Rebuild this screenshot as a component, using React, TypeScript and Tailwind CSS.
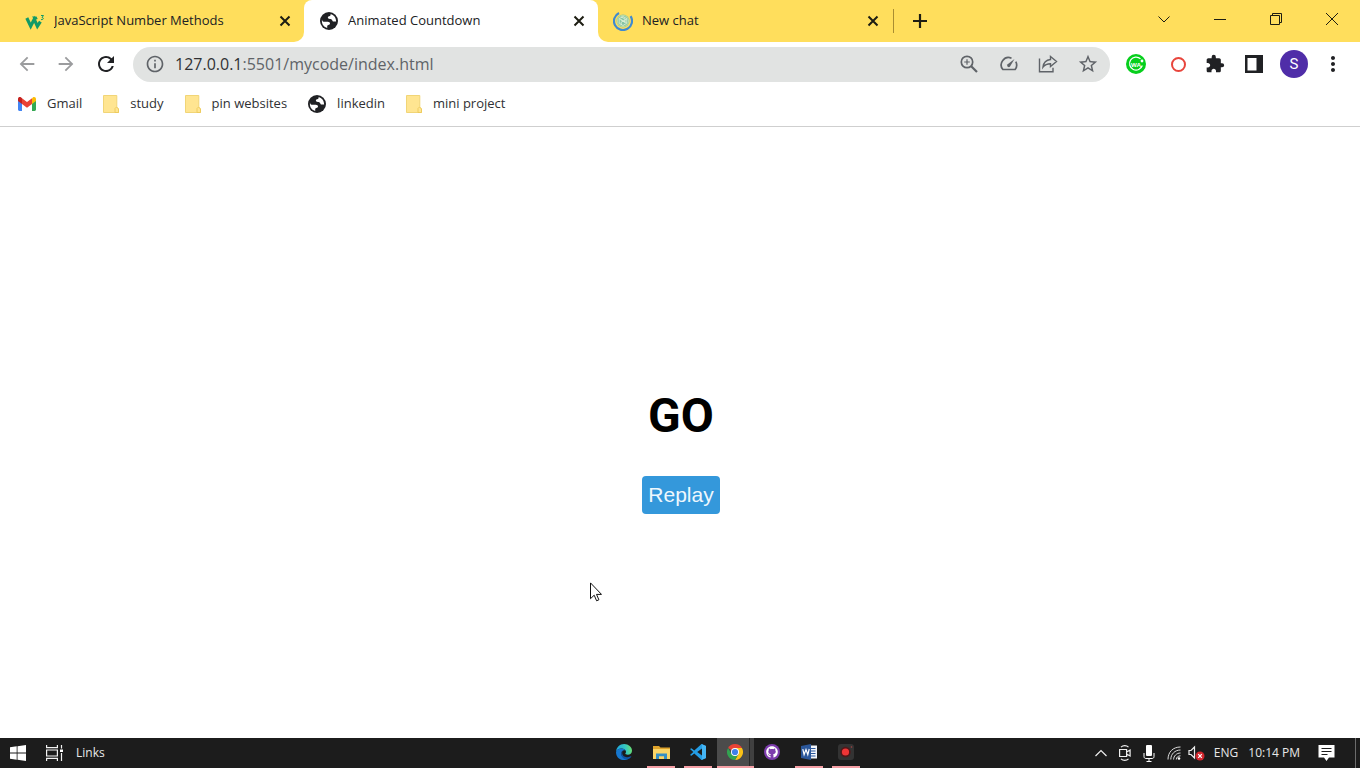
import React from 'react';
import {
  MdArrowBack,
  MdArrowForward,
  MdExtension,
  MdMoreVert,
  MdOutlineInfo,
  MdRefresh,
  MdStarBorder,
} from 'react-icons/md';
import { FaGithub } from 'react-icons/fa';

function GlobeIcon({ className }: { className?: string }) {
  return (
    <svg viewBox="0 0 18 18" className={className} aria-hidden="true">
      <circle cx="9" cy="9" r="9" fill="#202124" />
      <path d="M2 7.4c.1 1.5 1 2.3 2.6 2.3h3.2c1.3 0 2.2.7 2.2 1.8 0 .9-.7 1.3-1.7 1.4-.8.1-1.1.7-1.1 1.6v1.4C4.300 15.200 1.900 12.500 1.900 9.200c0-.7 0-1.200.1-1.800z" fill="#fff" />
      <path d="M10.600 2.100c.3 1.200-.3 2-1.500 2.200-1 .2-1.300.7-1.200 1.500.1.800.8 1.100 1.900 1.100 1.500 0 2.200.5 2.500 1.500.3 1 1.100 1.300 2.300 1.200l1.500-.2C16.100 5.800 13.800 2.900 10.600 2.100z" fill="#fff" />
    </svg>
  );
}

function SchoolsIcon() {
  return (
    <svg viewBox="0 0 20 20" className="size-5" fill="none" aria-hidden="true">
      <path d="M1.800 7 5.700 15.200 9.200 8.300l3.200 6.900 3-4.500" stroke="#129a66" strokeWidth="3.200" />
      <path d="M7 5.500h4.500l1.200 2.500-3 1z" fill="#129a66" />
      <path d="M16 4.500h2.500L17 6.500c1.900 0 1.900 2.500-1 2.100" stroke="#129a66" strokeWidth="1" />
    </svg>
  );
}

function ChatIcon() {
  return (
    <svg viewBox="0 0 20 20" className="size-5" fill="none" aria-hidden="true">
      <circle cx="10" cy="10" r="6.500" fill="#86c3a4" />
      <path d="M6 1.900A9 9 0 1 0 17.600 5.200" stroke="#3f8ad0" strokeWidth="2.200" />
      <circle cx="10" cy="10" r="5.600" stroke="#cfe2a0" strokeWidth=".8" />
      <path d="M10 5.500l3.800 2.200v4.500L10 14.500l-3.800-2.300V7.700zM6.500 8l5.500 3.500V8L8 5.800M13.700 8l-5.500 3.200v3M8 8.500l5.500 3.300" stroke="#e2f2d8" strokeWidth=".8" />
    </svg>
  );
}

function GmailIcon() {
  return (
    <svg viewBox="0 0 18 14" className="h-3.5 w-[18px]" aria-hidden="true">
      <path d="M0 2.500V12.500c0 .8.600 1.400 1.400 1.400H4V6z" fill="#4285f4" />
      <path d="M14 6v7.900h2.600c.8 0 1.400-.6 1.400-1.400V2.500z" fill="#34a853" />
      <path d="M14 1.500V7l4-3V2c0-1.900-2-2.500-3.200-1.500z" fill="#fbbc04" />
      <path d="M4 7V1.300L9 5l5-3.700V7l-5 3.700z" fill="#ea4335" />
      <path d="M0 2v2l4 3V1.300L3.200.5C1.800-.4 0 .2 0 2z" fill="#c5221f" />
    </svg>
  );
}

function FolderIcon() {
  return (
    <svg viewBox="0 0 16 18" className="h-[18px] w-4" aria-hidden="true">
      <path d="M.5.500h13.300v11.700l1.700 1.600v3.700H.5z" fill="#ffe591" stroke="#f1d577" strokeWidth="1" />
      <path d="M12 17.500v-4l1.500-1.500 2 2v3.500z" fill="#ffe591" stroke="#ecca5b" strokeWidth=".9" />
    </svg>
  );
}

const tabs = [
  { title: 'JavaScript Number Methods', icon: <SchoolsIcon /> },
  { title: 'Animated Countdown', icon: <GlobeIcon className="size-[18px]" /> },
  { title: 'New chat', icon: <ChatIcon /> },
];

function Tab({ index }: { index: number }) {
  const { title, icon } = tabs[index];
  return (
    <div className="flex h-full w-[294px] items-center pr-2.5 pl-[15px]">
      <span className="flex w-5 shrink-0 justify-center">{icon}</span>
      <a href="#" className="ml-[9px] min-w-0 flex-1 truncate text-[13px] text-[#202124]">
        {title}
      </a>
      <button aria-label={'Close ' + title} className="text-[#1d1d12]">
        <svg viewBox="0 0 18 18" className="size-[18px]" stroke="currentColor" strokeWidth="2">
          <path d="M4.500 4.500l9 9M13.500 4.500l-9 9" />
        </svg>
      </button>
    </div>
  );
}

function TabStrip() {
  return (
    <div className="flex h-[42px] bg-white">
      <div className="flex rounded-br-[10px] bg-[#ffde5c] pl-2.5">
        <Tab index={0} />
      </div>
      <div className="bg-[#ffde5c]">
        <div className="h-full rounded-t-lg bg-white">
          <Tab index={1} />
        </div>
      </div>
      <div className="flex min-w-0 flex-1 items-center rounded-bl-[10px] bg-[#ffde5c]">
        <Tab index={2} />
        <span className="ml-px h-6 w-px bg-[#a98d31]" />
        <button aria-label="New tab" className="ml-[15px] text-[#1d1d12]">
          <svg viewBox="0 0 22 22" className="size-[22px]" stroke="currentColor" strokeWidth="2.200">
            <path d="M11 4v14M4 11h14" />
          </svg>
        </button>
        <div className="-mt-1 ml-auto flex items-center text-[#1d1d12]">
          <button aria-label="Search tabs" className="flex w-14 justify-center">
            <svg viewBox="0 0 12 7" className="h-[7px] w-3" fill="none" stroke="currentColor">
              <path d="M.5.500 6 6 11.500.500" />
            </svg>
          </button>
          <button aria-label="Minimize" className="flex w-14 justify-center">
            <svg viewBox="0 0 12 12" className="size-3" stroke="currentColor">
              <path d="M0 6.500h12" />
            </svg>
          </button>
          <button aria-label="Restore" className="flex w-14 justify-center">
            <svg viewBox="0 0 12 12" className="size-3" fill="none" stroke="currentColor">
              <path d="M.5 2.500h9v9h-9zM2.500 2.500v-2h9v9h-2" />
            </svg>
          </button>
          <button aria-label="Close window" className="flex w-14 justify-center">
            <svg viewBox="0 0 12 12" className="size-3" stroke="currentColor">
              <path d="M0 0l12 12M12 0 0 12" />
            </svg>
          </button>
        </div>
      </div>
    </div>
  );
}

function Toolbar() {
  return (
    <div className="flex h-11 items-center bg-white pl-4 text-[#202124]">
      <div className="flex items-center gap-[17px]">
        <button aria-label="Back" className="text-[#9b9c9e]"><MdArrowBack className="size-[22px]" /></button>
        <button aria-label="Forward" className="text-[#9b9c9e]"><MdArrowForward className="size-[22px]" /></button>
        <button aria-label="Reload">
          <MdRefresh className="size-6" />
        </button>
      </div>
      <div className="ml-[15px] flex h-[35px] min-w-0 flex-1 items-center rounded-full bg-[#e1e3e2] pr-[11px] pl-3 text-[#5f6368]">
        <button aria-label="View site information"><MdOutlineInfo className="size-5" /></button>
        <div className="ml-2.5 min-w-0 flex-1 truncate text-base">
          <span className="text-[#303134]">127.0.0.1</span>:5501/mycode/index.html
        </div>
        <div className="flex items-center gap-[19px]">
          <button aria-label="Zoom">
            <svg viewBox="0 0 22 22" className="size-[22px]" fill="none" stroke="currentColor">
              <circle cx="9" cy="9" r="5.700" strokeWidth="1.700" />
              <path d="M13.200 13.200 19 19" strokeWidth="2.200" />
              <path d="M9 6.200v5.600M6.200 9h5.600" strokeWidth="1.200" />
            </svg>
          </button>
          <button aria-label="Performance">
            <svg viewBox="0 0 20 20" className="size-5" fill="none" stroke="currentColor" strokeWidth="1.700">
              <path d="M12.500 4.200a7.300 7.300 0 0 0-8.600 11.300h12.200a7.300 7.300 0 0 0 .7-7.800" />
              <path d="M8.700 12.700a1.800 1.800 0 0 1 0-2.500L15.500 5l-4.300 7.300a1.800 1.800 0 0 1-2.500.4z" fill="currentColor" stroke="none" />
            </svg>
          </button>
          <button aria-label="Share">
            <svg viewBox="0 0 20 20" className="size-5" fill="none" stroke="currentColor" strokeWidth="1.400">
              <path d="M1.500 4.500v13.300h13.500v-4" />
              <path d="M12.500 2.500 18.500 7.500l-6 5V9.700c-3.500 0-5.700 1-7.500 3.300.5-4 3-7 7.500-7.500z" />
            </svg>
          </button>
          <button aria-label="Bookmark this page"><MdStarBorder className="size-[22px]" /></button>
        </div>
      </div>
      <div className="ml-4 flex items-center">
        <button aria-label="WA extension">
          <svg viewBox="0 0 20 20" className="size-5">
            <circle cx="10" cy="10" r="10" fill="#06cf1c" />
            <path d="M14.500 4.800A6.500 6.500 0 1 0 16.300 11.500" fill="none" stroke="#fff" strokeWidth="1.200" />
            <circle cx="16" cy="7" r="1.400" fill="#fff" />
            <text x="10" y="12.500" textAnchor="middle" fontSize="6" fontWeight="700" fill="#fff">WA</text>
          </svg>
        </button>
        <button aria-label="Recorder extension" className="ml-[25px] size-[15px] rounded-full border-2 border-[#e8453c]" />
        <button aria-label="Extensions" className="ml-[19px]"><MdExtension className="size-5" /></button>
        <button aria-label="Side panel" className="ml-5">
          <svg viewBox="0 0 18 18" className="size-[18px]">
            <path d="M0 0h18v18H0z" fill="#202124" />
            <path d="M2.500 3h9v12.500h-9z" fill="#fff" />
          </svg>
        </button>
        <button aria-label="Profile" className="ml-[17px] size-7 rounded-full bg-[#4f2da8] font-['Roboto'] text-[15px] text-white">S</button>
        <button aria-label="Menu" className="mr-[15px] ml-[13px]"><MdMoreVert className="size-6" /></button>
      </div>
    </div>
  );
}

function Bookmarks() {
  return (
    <nav className="flex h-[41px] items-center gap-[21px] border-b border-[#cfcfcf] bg-white pb-[5px] pl-[18px] text-[13px] text-[#303134]">
      <a href="#" className="flex items-center gap-[11px]"><GmailIcon />Gmail</a>
      <a href="#" className="flex items-center gap-[11px]"><FolderIcon />study</a>
      <a href="#" className="flex items-center gap-[11px]"><FolderIcon />pin websites</a>
      <a href="#" className="flex items-center gap-[11px]"><GlobeIcon className="size-[18px]" />linkedin</a>
      <a href="#" className="flex items-center gap-[11px]"><FolderIcon />mini project</a>
    </nav>
  );
}

function EdgeLogo() {
  return (
    <svg viewBox="0 0 16 16" className="size-4">
      <defs>
        <linearGradient id="edgeTop" x1="0" x2="1" y1=".4" y2=".3">
          <stop offset="0" stopColor="#1ba5e0" />
          <stop offset=".6" stopColor="#37c8c0" />
          <stop offset="1" stopColor="#6be06c" />
        </linearGradient>
      </defs>
      <path d="M0 7.800C.2 3.400 3.700 0 8.200 0 12.500 0 16 3 16 6.700c0 2.500-2 4.100-4.200 4.100-1.500 0-2.500-.6-2.500-1.200 0-.5.700-.7.700-1.900C10 5.900 8 4.500 5.500 4.500 2.800 4.500.600 5.900 0 7.800z" fill="url(#edgeTop)" />
      <path d="M0 8c.4-2.200 2.700-3.500 5.300-3.500 1.800 0 3.400.7 4.200 1.900C6.900 5.700 5.200 7.400 5.200 9.500c0 2.900 3.200 6 7.900 4.400C9.500 18 0 16.500 0 8z" fill="#1677cf" />
      <path d="M6.700 7.100c-1.700 3 .8 6.500 4.800 6.100 1.500-.1 2.500-.6 3.300-1 .4-.2.700.1.400.5C12 17.500 5.200 15.300 5.200 9.700c0-1.200.6-2.100 1.500-2.600z" fill="#0f55a5" />
    </svg>
  );
}

function ExplorerLogo() {
  return (
    <svg viewBox="0 0 17 15" className="h-[15px] w-[17px]">
      <path d="M0 1h6l1.500 1.500H17V5H0z" fill="#dfa32b" />
      <path d="M0 4h17v10H0z" fill="#fbd567" />
      <path d="M3 14V8.500h11V14h-3v-2.700H6V14z" fill="#368fc4" />
    </svg>
  );
}

function CodeLogo() {
  return (
    <svg viewBox="0 0 16 16" className="size-4">
      <path d="M11.500 0 16 2v12l-4.500 2L4.300 9.500 1.400 11.800 0 11l3.300-3L0 5l1.400-.8 2.900 2.300zM12 4.500 7.200 8l4.800 3.500z" fill="#249de5" fillRule="evenodd" />
      <path d="M11.500 0 16 2v12l-4.500 2 .5-1.500v-13z" fill="#45b5f4" />
    </svg>
  );
}

function ChromeLogo() {
  return (
    <svg viewBox="0 0 16 16" className="size-4">
      <path d="M8 8 1.070 4A8 8 0 0 1 14.930 4z" fill="#e94335" />
      <path d="M8 4h6.930A8 8 0 0 1 8 16l3.500-6z" fill="#fbc116" />
      <path d="M1.070 4 4.500 10 8 12l3.500-2L8 16A8 8 0 0 1 1.070 4z" fill="#32a350" />
      <circle cx="8" cy="8" r="4" fill="#fff" />
      <circle cx="8" cy="8" r="3.100" fill="#3e7fe8" />
    </svg>
  );
}

function WordLogo() {
  return (
    <svg viewBox="0 0 16 16" className="size-4">
      <path d="M8 1.500h8v13H8z" fill="#f3f6fb" />
      <path d="M9 4.500h5.500M9 7h5.500M9 9.500h5.500M9 12h5.500" stroke="#2b579a" strokeWidth="1" />
      <path d="M0 2 10 0v16L0 14z" fill="#2b579a" />
      <path d="m1.800 5.200 1.300 5.400L5 5.500l1.800 5.100L8.200 5" fill="none" stroke="#fff" strokeWidth="1.200" />
    </svg>
  );
}

function RecorderLogo() {
  return (
    <svg viewBox="0 0 16 16" className="size-4">
      <rect width="16" height="16" rx="3" fill="#333" />
      <circle cx="7.500" cy="8" r="5.200" fill="#521719" />
      <circle cx="7.500" cy="8" r="3.600" fill="#f03536" />
      <circle cx="13.500" cy="3" r=".8" fill="#aa4444" />
    </svg>
  );
}

const apps = [
  { name: 'Edge', icon: <EdgeLogo />, open: false, active: false },
  { name: 'File Explorer', icon: <ExplorerLogo />, open: true, active: false },
  { name: 'Visual Studio Code', icon: <CodeLogo />, open: true, active: false },
  { name: 'Chrome', icon: <ChromeLogo />, open: true, active: true },
  {
    name: 'GitHub Desktop',
    icon: (
      <span className="flex size-4 items-center justify-center rounded-full bg-[#7d3cad] text-white">
        <FaGithub className="size-3" />
      </span>
    ),
    open: false,
    active: false,
  },
  { name: 'Word', icon: <WordLogo />, open: true, active: false },
  { name: 'Recorder', icon: <RecorderLogo />, open: true, active: false },
];

function Taskbar() {
  return (
    <footer className="grid h-[30px] grid-cols-[55fr_auto_45fr] bg-[#1c1c1c] text-xs text-[#e8e8e8]">
      <div className="flex items-center pl-2.5">
        <button aria-label="Start">
          <svg viewBox="0 0 16 16" className="size-4" fill="#fff">
            <path d="M0 2.300 6.700 1.300v6.300H0zM7.500 1.200 16 0v7.600H7.500zM0 8.400h6.700v6.300L0 13.700zM7.500 8.400H16V16l-8.500-1.200z" />
          </svg>
        </button>
        <button aria-label="Task view" className="ml-5">
          <svg viewBox="0 0 17 16" className="h-4 w-[17px]" fill="none" stroke="#f2f2f2" strokeWidth="1.200">
            <path d="M.6 0v2.600h10.800V0M.6 16v-2.600h10.800V16M.6 5h10.800v6H.600zM15.500 0v3.500M15.500 8v8" />
            <path d="M14 4.500h3v2.500h-3z" fill="#fff" stroke="none" />
          </svg>
        </button>
        <button className="ml-[13px]">Links</button>
      </div>
      <div className="flex">
        {apps.map((app) => (
          <button
            key={app.name}
            aria-label={app.name}
            className={
              app.active
                ? 'flex w-[37px] flex-col items-center bg-[linear-gradient(to_right,#4b4b4b_32px,#272727_32px,#272727_33px,#404040_33px)]'
                : 'flex w-[37px] flex-col items-center'
            }
          >
            <span className="flex flex-1 items-center">{app.icon}</span>
            {app.open && <span className={app.active ? 'h-0.5 w-full bg-[#f59fa5]' : 'h-0.5 w-7 bg-[#f59fa5]'} />}
            {!app.open && <span className="h-0.5" />}
          </button>
        ))}
      </div>
      <div className="flex items-center justify-end">
        <button aria-label="Show hidden icons">
          <svg viewBox="0 0 12 8" className="h-2 w-3" fill="none" stroke="#eee" strokeWidth="1.200">
            <path d="m.5 7L6 1.500 11.500 7" />
          </svg>
        </button>
        <button aria-label="Meet now" className="ml-3">
          <svg viewBox="0 0 12 16" className="h-4 w-3" fill="none" stroke="#eee" strokeWidth="1.200">
            <path d="M.6 4.500h7v7h-7zM7.600 7l3.500-2v6L7.600 9M2 2.200C4 .200 7.500.200 9.500 2.200M2 13.800c2 2 5.500 2 7.500 0" />
          </svg>
        </button>
        <button aria-label="Microphone" className="ml-3">
          <svg viewBox="0 0 12 17" className="h-[17px] w-3" fill="none" stroke="#fff">
            <rect x="3" y="0" width="6" height="11" rx="1" fill="#fff" stroke="none" />
            <path d="M1 8v3.500c0 1.500 1 2 2 2h6c1 0 2-.5 2-2V8M6 13.500v3M3.500 16.500h5" />
          </svg>
        </button>
        <button aria-label="Network" className="ml-3">
          <svg viewBox="0 0 14 14" className="size-3.5" fill="none" stroke="#ddd" strokeWidth="1">
            <path d="M1 13.500C1 6 6 1 13.500 1M3.800 13.500C3.800 8 8 4 13.500 4M6.600 13.500c0-3.500 3-6.500 6.900-6.500M9.300 13.500c0-2 1.700-3.700 4.200-3.700" />
            <circle cx="12" cy="12.500" r="1.300" fill="#fff" stroke="none" />
          </svg>
        </button>
        <button aria-label="Volume muted" className="ml-[7px]">
          <svg viewBox="0 0 17 16" className="h-4 w-[17px]" fill="none">
            <path d="M1 5.500h2L6.500 2v11L3 9.500H1z" stroke="#eee" strokeWidth="1.200" />
            <circle cx="12" cy="11" r="4.500" fill="#d3262d" />
            <path d="m10.200 9.200 3.600 3.600M13.800 9.200l-3.600 3.600" stroke="#fff" strokeWidth="1.200" />
          </svg>
        </button>
        <button className="ml-[9px]">ENG</button>
        <button className="ml-2.5 whitespace-nowrap">10:14 PM</button>
        <button aria-label="Notifications" className="ml-[18px]">
          <svg viewBox="0 0 17 16" className="h-4 w-[17px]">
            <path d="M.5 0h16v12.500H11L8.500 16 6 12.500H.5z" fill="#fff" />
            <path d="M3.500 3.500h10M3.500 6.500h10M3.500 9.500h6" stroke="#1c1c1c" />
          </svg>
        </button>
        <button aria-label="Show desktop" className="ml-5 h-full w-[5px] border-l border-[#6c6c6c]" />
      </div>
    </footer>
  );
}

export default function App() {
  return (
    <div className="relative flex min-h-screen flex-col bg-white font-['Open_Sans','Noto_Sans',sans-serif]">
      <header>
        <TabStrip />
        <Toolbar />
        <Bookmarks />
      </header>
      <main className="flex flex-1 flex-col items-center justify-center gap-8 pt-9 pl-0.5">
        <h1 className="font-['Roboto',sans-serif] text-5xl leading-14 font-bold text-black">GO</h1>
        <button className="h-[38px] rounded bg-[#3498db] px-1.5 font-['Liberation_Sans',sans-serif] text-[21px] text-[#eef7fd]">
          Replay
        </button>
      </main>
      <svg viewBox="0 0 12 20" className="pointer-events-none absolute top-[582px] left-[590px] h-5 w-3" aria-hidden="true">
        <path d="M.5.900v15.800l3.700-3.500 2.400 5.600 2.300-1-2.400-5.400h5z" fill="#fff" stroke="#111" />
      </svg>
      <Taskbar />
    </div>
  );
}
